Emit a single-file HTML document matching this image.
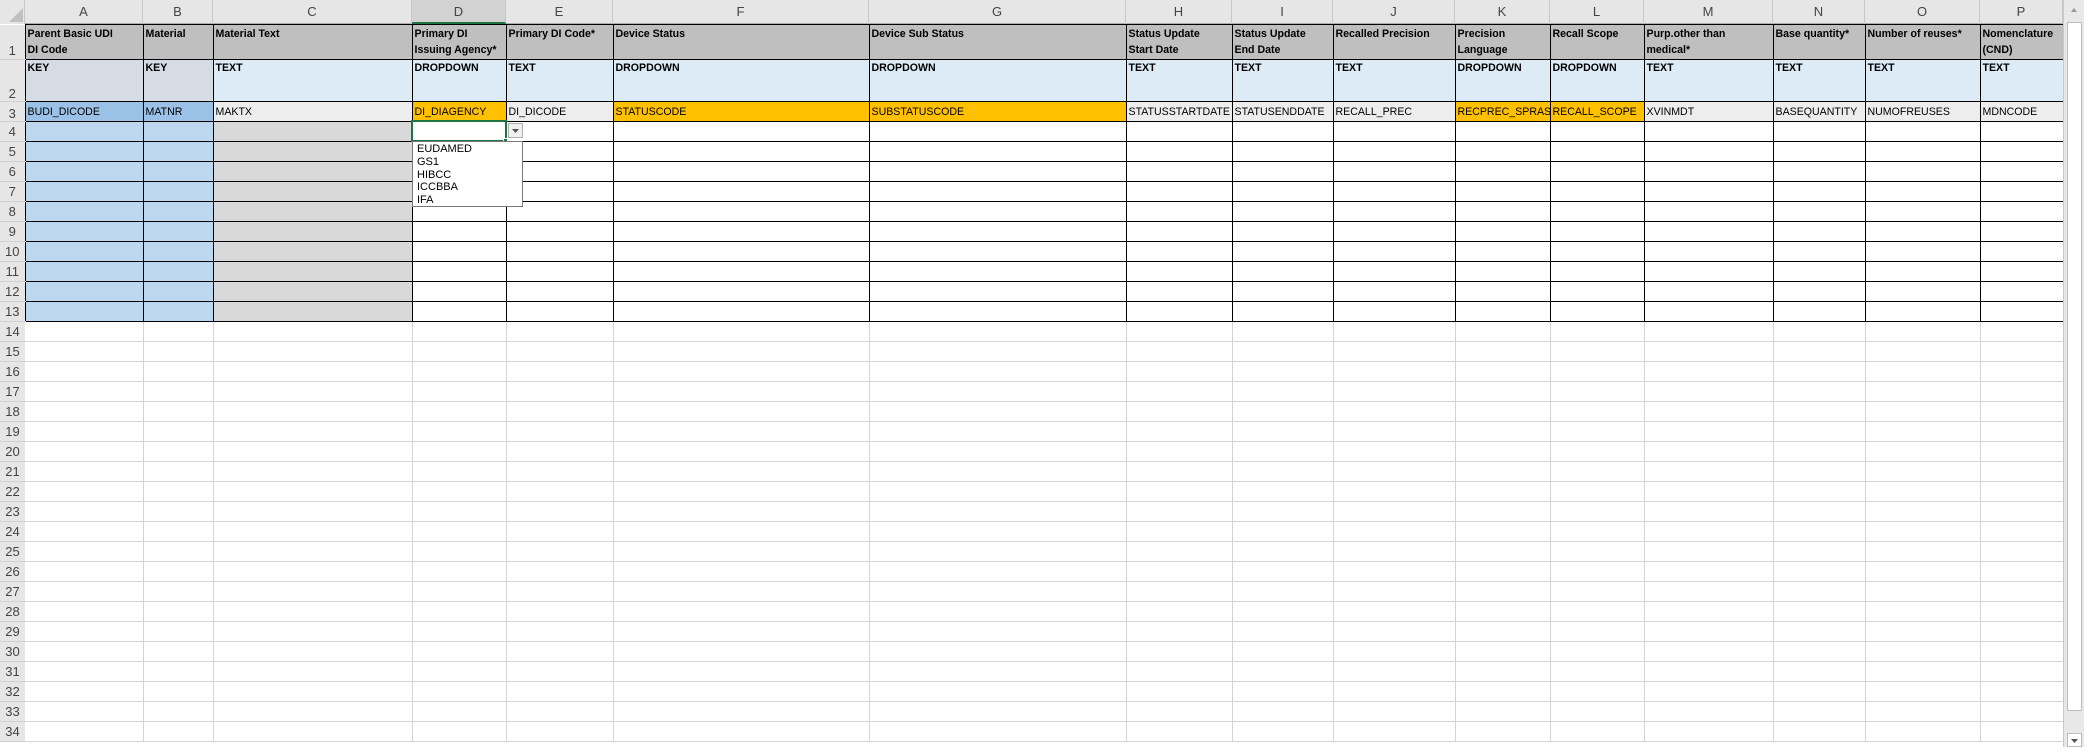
<!DOCTYPE html>
<html><head><meta charset="utf-8">
<style>
*{margin:0;padding:0;box-sizing:border-box}
body{width:2084px;height:747px;overflow:hidden;background:#fff;font-family:"Liberation Sans",sans-serif;position:relative}
#colhdr{position:absolute;left:0;top:0;height:24px;width:2063px;background:#e6e6e6;border-bottom:1px solid #ababab}
#colhdr div{position:absolute;top:0;height:24px;line-height:24px;text-align:center;font-size:13px;color:#444;border-right:1px solid #c8c8c8}
table{position:absolute;left:0;top:24px;border-collapse:collapse;table-layout:fixed;width:2063px}
td{font-size:10.6px;color:#000;padding:0 2px;white-space:nowrap;overflow:hidden;vertical-align:top}
td.rh{background:#e6e6e6;color:#444;font-size:13px;text-align:center;vertical-align:middle;border:none;border-bottom:1px solid #d0d0d0;padding:0}
tr.b td:not(.rh){border:1px solid #000}
tr.g td:not(.rh){border-right:1px solid #d4d4d4;border-bottom:1px solid #d4d4d4}
tr.r1 td{background:#bfbfbf;font-weight:bold;line-height:16px;padding-top:1px}
tr.r2 td{background:#ddebf7;font-weight:bold;padding-top:2px}
tr.r3 td{background:#ededed;vertical-align:middle}
.ab2{background:#d6dce4!important}
.or{background:#ffc000!important}
.bl{background:#9bc2e6!important}
.lb{background:#bdd7ee}
.gr{background:#d9d9d9}
tr.r1 td.rh,tr.r2 td.rh,tr.r3 td.rh{background:#e6e6e6;font-weight:normal;vertical-align:bottom}
</style></head><body>
<div id="colhdr">
<div style="left:0;width:25px;background:#e6e6e6"><svg width="14" height="14" style="position:absolute;left:9px;top:8px"><polygon points="14,0 14,14 0,14" fill="#c0c0c0"/></svg></div>
<div style="left:25px;width:118px">A</div>
<div style="left:143px;width:70px">B</div>
<div style="left:213px;width:199px">C</div>
<div style="left:412px;width:94px;background:#d2d2d2;border-bottom:2px solid #217346">D</div>
<div style="left:506px;width:107px">E</div>
<div style="left:613px;width:256px">F</div>
<div style="left:869px;width:257px">G</div>
<div style="left:1126px;width:106px">H</div>
<div style="left:1232px;width:101px">I</div>
<div style="left:1333px;width:122px">J</div>
<div style="left:1455px;width:95px">K</div>
<div style="left:1550px;width:94px">L</div>
<div style="left:1644px;width:129px">M</div>
<div style="left:1773px;width:92px">N</div>
<div style="left:1865px;width:115px">O</div>
<div style="left:1980px;width:83px">P</div>
</div>
<table>
<colgroup><col style="width:25px"><col style="width:118px"><col style="width:70px"><col style="width:199px"><col style="width:94px"><col style="width:107px"><col style="width:256px"><col style="width:257px"><col style="width:106px"><col style="width:101px"><col style="width:122px"><col style="width:95px"><col style="width:94px"><col style="width:129px"><col style="width:92px"><col style="width:115px"><col style="width:83px"></colgroup>
<tr class="b r1" style="height:35px"><td class="rh">1</td><td>Parent Basic UDI<br>DI Code</td><td>Material</td><td>Material Text</td><td>Primary DI<br>Issuing Agency*</td><td>Primary DI Code*</td><td>Device Status</td><td>Device Sub Status</td><td>Status Update<br>Start Date</td><td>Status Update<br>End Date</td><td>Recalled Precision</td><td>Precision<br>Language</td><td>Recall Scope</td><td>Purp.other than<br>medical*</td><td>Base quantity*</td><td>Number of reuses*</td><td>Nomenclature<br>(CND)</td></tr>
<tr class="b r2" style="height:42px"><td class="rh">2</td><td class="ab2">KEY</td><td class="ab2">KEY</td><td>TEXT</td><td>DROPDOWN</td><td>TEXT</td><td>DROPDOWN</td><td>DROPDOWN</td><td>TEXT</td><td>TEXT</td><td>TEXT</td><td>DROPDOWN</td><td>DROPDOWN</td><td>TEXT</td><td>TEXT</td><td>TEXT</td><td>TEXT</td></tr>
<tr class="b r3" style="height:20px"><td class="rh">3</td><td class="bl">BUDI_DICODE</td><td class="bl">MATNR</td><td>MAKTX</td><td class="or">DI_DIAGENCY</td><td>DI_DICODE</td><td class="or">STATUSCODE</td><td class="or">SUBSTATUSCODE</td><td>STATUSSTARTDATE</td><td>STATUSENDDATE</td><td>RECALL_PREC</td><td class="or">RECPREC_SPRAS</td><td class="or">RECALL_SCOPE</td><td>XVINMDT</td><td>BASEQUANTITY</td><td>NUMOFREUSES</td><td>MDNCODE</td></tr>
</table>
<script>
var t=document.querySelector('table');
for(var r=4;r<=34;r++){var tr=document.createElement('tr');tr.className=r<=13?'b':'g';tr.style.height='20px';
var h='<td class="rh">'+r+'</td>';for(var c=0;c<16;c++){var cl='';if(r<=13){if(c<2)cl=' class="lb"';else if(c==2)cl=' class="gr"';}h+='<td'+cl+'></td>';}tr.innerHTML=h;t.appendChild(tr);}
</script>
<div style="position:absolute;left:411px;top:120px;width:96px;height:22px;border:2px solid #217346"></div>
<div style="position:absolute;left:503px;top:138px;width:5px;height:5px;background:#217346;border:1px solid #fff"></div>
<div style="position:absolute;left:508px;top:123px;width:15px;height:15px;background:#f0f0f0;border:1px solid #b0b0b0"><svg width="13" height="13" style="position:absolute;left:0;top:0"><polygon points="3,5 10,5 6.5,9" fill="#555"/></svg></div>
<div style="position:absolute;left:412px;top:141px;width:111px;height:66px;background:#fff;border:1px solid #7a7a7a;font-size:11px;line-height:12.8px;padding:1px 4px">EUDAMED<br>GS1<br>HIBCC<br>ICCBBA<br>IFA</div>
<div style="position:absolute;left:2063px;top:0;width:21px;height:747px;background:#e8e8e8;border-left:1px solid #c8c8c8">
<div style="position:absolute;left:3px;top:3px;width:14px;height:14px;text-align:center"><svg width="14" height="14"><polygon points="4,9 10,9 7,5" fill="#999"/></svg></div>
<div style="position:absolute;left:3px;top:22px;width:15px;height:689px;background:#fff;border:1px solid #bdbdbd"></div>
<div style="position:absolute;left:3px;top:733px;width:15px;height:14px;background:#fff;border:1px solid #bdbdbd"><svg width="13" height="12"><polygon points="3,4 10,4 6.5,8" fill="#555"/></svg></div>
</div>
</body></html>
